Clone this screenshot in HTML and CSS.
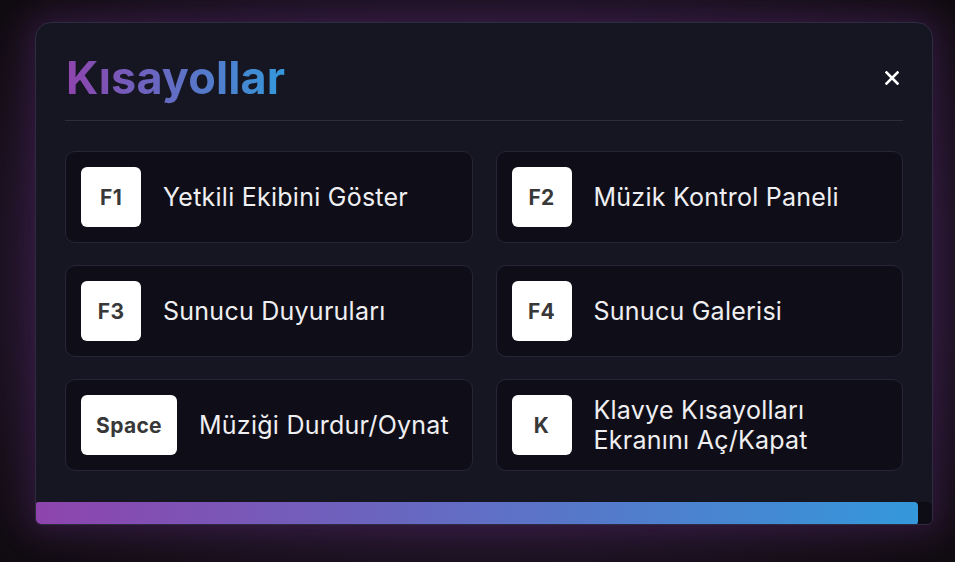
FILE: index.html
```html
<!DOCTYPE html>
<html lang="tr">
<head>
<meta charset="utf-8">
<title>Kısayollar</title>
<link rel="stylesheet" href="styles.css">
</head>
<body>
<div class="backdrop">
  <div class="modal">
    <div class="modal-header">
      <h1 class="title">Kısayollar</h1>
      <button class="close" aria-label="Kapat">
        <svg width="14" height="14" viewBox="0 0 14 14"><path d="M1.5 1.5 L12.5 12.5 M12.5 1.5 L1.5 12.5" stroke="#fff" stroke-width="2.6" stroke-linecap="square"/></svg>
      </button>
    </div>
    <div class="grid">
      <div class="item"><span class="key">F1</span><span class="label">Yetkili Ekibini Göster</span></div>
      <div class="item"><span class="key">F2</span><span class="label">Müzik Kontrol Paneli</span></div>
      <div class="item"><span class="key">F3</span><span class="label">Sunucu Duyuruları</span></div>
      <div class="item"><span class="key">F4</span><span class="label">Sunucu Galerisi</span></div>
      <div class="item"><span class="key key-wide">Space</span><span class="label">Müziği Durdur/Oynat</span></div>
      <div class="item"><span class="key">K</span><span class="label">Klavye Kısayolları<br>Ekranını Aç/Kapat</span></div>
    </div>
    <div class="progress"><div class="progress-fill" style="width: 98.3%"></div></div>
  </div>
</div>
</body>
</html>
```
FILE: styles.css
```css
* { box-sizing: border-box; }
html, body { margin: 0; padding: 0; }
body {
  width: 955px;
  height: 562px;
  overflow: hidden;
  background: radial-gradient(ellipse 75% 75% at 50% 50%, #2c1a32 0%, #22152a 55%, #0d0a0c 100%);
  font-family: "Inter", "DejaVu Sans", sans-serif;
}
.backdrop {
  padding: 22px 0 0 35px;
}
.modal {
  width: 898px;
  height: 503px;
  background: #161623;
  border: 1px solid #2e2c40;
  border-radius: 16px 16px 6px 6px;
  padding: 29px 29px 0;
  display: flex;
  flex-direction: column;
  overflow: hidden;
  box-shadow: 0 0 30px 8px rgba(110, 45, 140, 0.3);
}
.modal-header {
  display: flex;
  align-items: center;
  justify-content: space-between;
  height: 69px;
  padding-bottom: 16px;
  border-bottom: 1px solid #2d2c3c;
}
.title {
  margin: 0 0 0 1px;
  font-size: 45px;
  font-weight: 700;
  line-height: 52px;
  letter-spacing: 0.1px;
  background: linear-gradient(90deg, #8e44ad 0%, #3498db 100%);
  -webkit-background-clip: text;
  background-clip: text;
  color: transparent;
}
.close {
  background: none;
  border: 0;
  padding: 0;
  margin-right: 4px;
  width: 14px;
  height: 14px;
  display: flex;
}
.grid {
  margin-top: 30px;
  display: grid;
  grid-template-columns: 1fr 1fr;
  grid-auto-rows: 92px;
  column-gap: 23px;
  row-gap: 22px;
}
.item {
  display: flex;
  align-items: center;
  gap: 22px;
  padding: 0 15px;
  background: #0f0e18;
  border: 1px solid #262536;
  border-radius: 10px;
}
.key {
  flex: none;
  min-width: 60px;
  height: 60px;
  padding: 0 14px;
  display: flex;
  align-items: center;
  justify-content: center;
  background: #fff;
  border-radius: 6px;
  color: #383838;
  font-size: 21px;
  font-weight: 700;
  letter-spacing: 0.3px;
}
.key-wide { min-width: 96px; }
.label {
  color: #efeff2;
  font-size: 25px;
  line-height: 30px;
  letter-spacing: 0.25px;
}
.progress {
  margin: auto -30px -1px;
  height: 23px;
  background: #0e0d15;
  border-radius: 0 6px 6px 0;
  overflow: hidden;
}
.progress-fill {
  height: 100%;
  border-radius: 4px;
  background: linear-gradient(90deg, #8e44ad 0%, #3498db 100%);
}
```
